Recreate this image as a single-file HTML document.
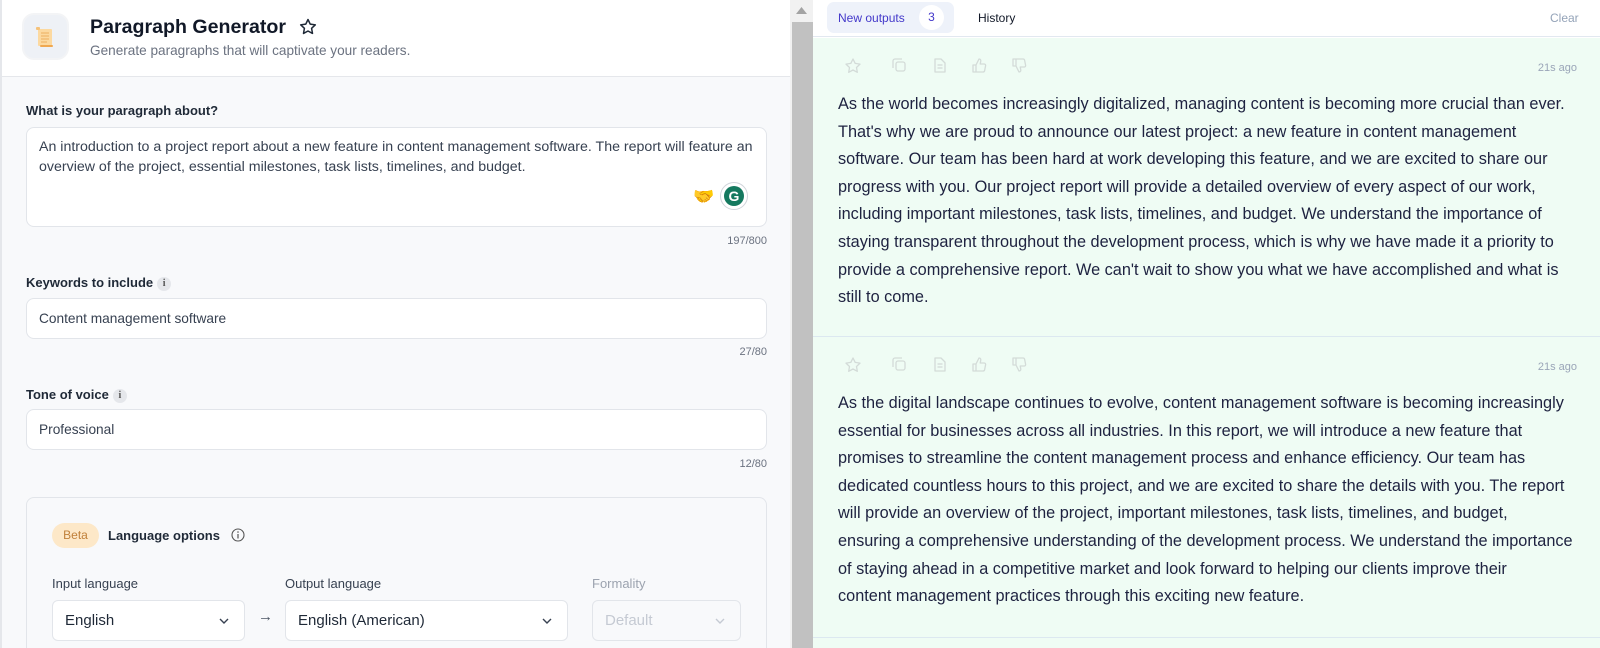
<!DOCTYPE html>
<html><head><meta charset="utf-8"><style>
*{box-sizing:border-box;margin:0;padding:0}
html,body{width:1600px;height:648px;overflow:hidden}
body{font-family:"Liberation Sans",sans-serif;background:#fff;color:#1f2937}
#wrap{position:relative;width:1600px;height:648px;overflow:hidden}
.abs{position:absolute}
#left{left:0;top:0;width:790px;height:648px;background:#f8f9fb;border-left:2px solid #e5e7eb}
#hdr{left:0;top:0;width:788px;height:77px;background:#fff;border-bottom:1px solid #e5e7eb}
.lbl{font-size:13px;font-weight:bold;color:#1f2937}
.inp{background:#fff;border:1px solid #e2e5ea;border-radius:8px;font-size:13.7px;color:#374151}
.cnt{font-size:11px;color:#6b7280;text-align:right;width:100px}
.info{display:inline-block;width:14px;height:14px;border-radius:50%;background:#e5e7eb;color:#555;font-size:10px;text-align:center;line-height:14px;font-weight:bold;font-family:"Liberation Serif",serif;vertical-align:1px;margin-left:4px}
.sel{background:#fff;border:1px solid #e2e5ea;border-radius:6px;font-size:15px;color:#1f2937;padding-left:12px;line-height:39px}
.chev{position:absolute;right:14px;top:14px}
#sb{left:790px;top:0;width:23px;height:648px;background:#f1f1f1}
#right{left:813px;top:0;width:787px;height:648px;background:#fff}
.card{position:absolute;left:0;width:787px;background:#effcf4;border-bottom:1px solid #dce8f0}
.para{position:absolute;left:25px;font-size:16.3px;line-height:27.6px;color:#1e2240;white-space:nowrap}
.ago{position:absolute;right:23px;font-size:11px;color:#9aa5b8}
</style></head><body><div id="wrap">
<div id="left" class="abs">
 <div id="hdr" class="abs">
  <div class="abs" style="left:20px;top:13px;width:47px;height:47px;border-radius:12px;background:#eef1f6;border:2px solid #f3f4f6">
   <svg width="47" height="47" viewBox="0 0 47 47" style="position:absolute;left:-2px;top:-2px"><rect x="16" y="16" width="14" height="17" rx="1" fill="#fcd9a0"/><rect x="14" y="14" width="4" height="3" rx="1" fill="#f5c27a"/><rect x="18" y="32" width="13" height="2" rx="1" fill="#f0a850"/><g stroke="#e7a34f" stroke-width="0.8"><line x1="19" y1="20" x2="27" y2="20"/><line x1="19" y1="23" x2="27" y2="23"/><line x1="19" y1="26" x2="27" y2="26"/><line x1="19" y1="29" x2="25" y2="29"/></g></svg>
  </div>
  <div class="abs" style="left:88px;top:16px;font-size:19.6px;font-weight:bold;color:#111827">Paragraph Generator</div>
  <svg class="abs" style="left:296px;top:17px" width="20" height="20" viewBox="0 0 24 24"><path d="M12 3l2.7 5.6 6.1.8-4.5 4.2 1.1 6.1L12 16.8 6.6 19.7l1.1-6.1L3.2 9.4l6.1-.8z" fill="none" stroke="#1f2937" stroke-width="1.8" stroke-linejoin="round"/></svg>
  <div class="abs" style="left:88px;top:43px;font-size:13.6px;color:#6b7280">Generate paragraphs that will captivate your readers.</div>
 </div>
 <div class="abs lbl" style="left:24px;top:103px">What is your paragraph about?</div>
 <div class="abs inp" style="left:24px;top:127px;width:741px;height:100px;padding:9px 12px;line-height:20px;white-space:nowrap;font-size:14.2px">An introduction to a project report about a new feature in content management software. The report will feature an<br>overview of the project, essential milestones, task lists, timelines, and budget.</div>
 <div class="abs" style="left:691px;top:187px;font-size:17px">🤝</div>
 <div class="abs" style="left:718px;top:182px;width:28px;height:28px;border-radius:50%;background:#fff;border:1px solid #d1d5db"><div style="margin:3px;width:20px;height:20px;border-radius:50%;background:#15795f;color:#fff;font-weight:bold;font-size:14px;text-align:center;line-height:20px">G</div></div>
 <div class="abs cnt" style="left:665px;top:235px">197/800</div>
 <div class="abs lbl" style="left:24px;top:275px">Keywords to include<span class="info">i</span></div>
 <div class="abs inp" style="left:24px;top:298px;width:741px;height:41px;padding-left:12px;line-height:39px">Content management software</div>
 <div class="abs cnt" style="left:665px;top:346px">27/80</div>
 <div class="abs lbl" style="left:24px;top:387px">Tone of voice<span class="info">i</span></div>
 <div class="abs inp" style="left:24px;top:409px;width:741px;height:41px;padding-left:12px;line-height:39px">Professional</div>
 <div class="abs cnt" style="left:665px;top:458px">12/80</div>
 <div class="abs" style="left:24px;top:497px;width:741px;height:170px;border:1px solid #e2e5ea;border-radius:8px;background:#f8f9fb"></div>
 <div class="abs" style="left:50px;top:523px;width:47px;height:25px;border-radius:13px;background:#fde8c8;color:#c0803a;font-size:12px;text-align:center;line-height:25px">Beta</div>
 <div class="abs lbl" style="left:106px;top:528px">Language options</div>
 <svg class="abs" style="left:229px;top:528px" width="14" height="14" viewBox="0 0 14 14"><circle cx="7" cy="7" r="6" fill="none" stroke="#555" stroke-width="1.1"/><line x1="7" y1="6" x2="7" y2="10.5" stroke="#555" stroke-width="1.2"/><circle cx="7" cy="4" r=".8" fill="#555"/></svg>
 <div class="abs" style="left:50px;top:576px;font-size:13px;color:#374151">Input language</div>
 <div class="abs" style="left:283px;top:576px;font-size:13px;color:#374151">Output language</div>
 <div class="abs" style="left:590px;top:576px;font-size:13px;color:#9ca3af">Formality</div>
 <div class="abs sel" style="left:50px;top:600px;width:193px;height:41px">English<svg class="chev" width="12" height="12" viewBox="0 0 12 12"><path d="M2 4l4 4 4-4" fill="none" stroke="#374151" stroke-width="1.4"/></svg></div>
 <div class="abs" style="left:256px;top:608px;font-size:15px;color:#4b5563">→</div>
 <div class="abs sel" style="left:283px;top:600px;width:283px;height:41px">English (American)<svg class="chev" width="12" height="12" viewBox="0 0 12 12"><path d="M2 4l4 4 4-4" fill="none" stroke="#374151" stroke-width="1.4"/></svg></div>
 <div class="abs sel" style="left:590px;top:600px;width:149px;height:41px;background:#f8f9fb;color:#c5cad3">Default<svg class="chev" width="12" height="12" viewBox="0 0 12 12"><path d="M2 4l4 4 4-4" fill="none" stroke="#c5cad3" stroke-width="1.4"/></svg></div>
</div>
<div id="sb" class="abs"><svg class="abs" style="left:6px;top:7px" width="11" height="7" viewBox="0 0 11 7"><path d="M0 7L5.5 0 11 7z" fill="#a3a3a3"/></svg><div class="abs" style="left:2px;top:22px;width:21px;height:626px;background:#c1c1c1"></div></div>
<div id="right" class="abs">
 <div class="abs" style="left:0;top:0;width:787px;height:37px;border-bottom:1px solid #e2e8f0;background:#fff"></div>
 <div class="abs" style="left:14px;top:2px;width:127px;height:31px;border-radius:7px;background:#eef2fa"></div>
 <div class="abs" style="left:25px;top:11px;font-size:12px;color:#4338ca">New outputs</div>
 <div class="abs" style="left:106px;top:5px;width:25px;height:25px;border-radius:50%;background:#fff;font-size:12px;color:#4338ca;text-align:center;line-height:25px">3</div>
 <div class="abs" style="left:165px;top:11px;font-size:12px;color:#111827">History</div>
 <div class="abs" style="left:737px;top:11px;font-size:12px;color:#94a3b8">Clear</div>
 <div class="card" style="top:38px;height:299px"></div>
 <div class="card" style="top:337px;height:301px"></div>
 <div class="abs" style="left:0;top:638px;width:787px;height:10px;background:#effcf4"></div>
 <div class="ago" style="top:62px">21s ago</div>
 <div class="ago" style="top:361px">21s ago</div>
 <svg class="abs" style="left:8px;top:2px" width="779" height="646">
  <g fill="none" stroke="#d3dbd8" stroke-width="1.3" stroke-linejoin="round">
   <g id="ic">
    <path d="M32 57l2.2 4.4 4.8.7-3.5 3.4.8 4.8-4.3-2.3-4.3 2.3.8-4.8-3.5-3.4 4.8-.7z"/>
    <rect x="75" y="60" width="9" height="9" rx="2"/><path d="M72 66v-7a2 2 0 0 1 2-2h7"/>
    <path d="M114 57h6l4 4v9h-10z"/><line x1="116.5" y1="63" x2="121.5" y2="63"/><line x1="116.5" y1="66" x2="121.5" y2="66"/>
    <path d="M152 63h3v7h-3zM155 63l3-6c1.5 0 2 1 1.7 2.5l-.5 2.5h4c1 0 1.6.8 1.4 1.8l-1 5c-.2.8-.8 1.2-1.6 1.2H155"/>
    <path d="M192 64h3v-7h-3zM195 64l3 6c1.5 0 2-1 1.7-2.5l-.5-2.5h4c1 0 1.6-.8 1.4-1.8l-1-5c-.2-.8-.8-1.2-1.6-1.2H195"/>
   </g>
   <use href="#ic" transform="translate(0,299)"/>
  </g>
 </svg>
 <div class="para" style="top:91px">As the world becomes increasingly digitalized, managing content is becoming more crucial than ever.<br>That's why we are proud to announce our latest project: a new feature in content management<br>software. Our team has been hard at work developing this feature, and we are excited to share our<br>progress with you. Our project report will provide a detailed overview of every aspect of our work,<br>including important milestones, task lists, timelines, and budget. We understand the importance of<br>staying transparent throughout the development process, which is why we have made it a priority to<br>provide a comprehensive report. We can't wait to show you what we have accomplished and what is<br>still to come.</div>
 <div class="para" style="top:390px">As the digital landscape continues to evolve, content management software is becoming increasingly<br>essential for businesses across all industries. In this report, we will introduce a new feature that<br>promises to streamline the content management process and enhance efficiency. Our team has<br>dedicated countless hours to this project, and we are excited to share the details with you. The report<br>will provide an overview of the project, important milestones, task lists, timelines, and budget,<br>ensuring a comprehensive understanding of the development process. We understand the importance<br>of staying ahead in a competitive market and look forward to helping our clients improve their<br>content management practices through this exciting new feature.</div>
</div>
</div></body></html>
